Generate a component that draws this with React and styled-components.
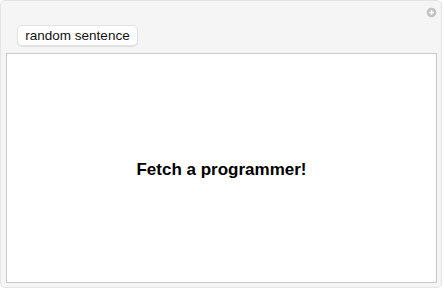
import React from "react";
import styled, { createGlobalStyle } from "styled-components";

const Global = createGlobalStyle`
  html, body { margin: 0; padding: 0; background: #ffffff; }
  body { font-family: "Liberation Sans", Arial, sans-serif; }
`;

const Panel = styled.div`
  position: relative;
  box-sizing: border-box;
  width: 442px;
  height: 288px;
  background: #f5f5f5;
  border: 1px solid #e4e4e4;
  border-radius: 5px;
  display: flex;
  flex-direction: column;
  padding: 24px 4px 4px 5px;
`;

const Toolbar = styled.div`
  display: flex;
  align-items: flex-start;
  height: 28px;
  padding-left: 11px;
`;

const Button = styled.button`
  box-sizing: border-box;
  height: 21px;
  width: 121px;
  padding: 0;
  background: #ffffff;
  border: 1px solid #e2e2e2;
  border-radius: 5px;
  box-shadow: 0 1px 1px rgba(0, 0, 0, 0.08);
  font-family: "Liberation Sans", Arial, sans-serif;
  font-size: 13.5px;
  color: #111;
  display: flex;
  align-items: center;
  justify-content: center;
`;

const Output = styled.div`
  flex: 1;
  box-sizing: border-box;
  background: #ffffff;
  border: 1px solid #c9c9c9;
  display: flex;
  align-items: center;
  justify-content: center;
`;

const Message = styled.div`
  font-family: "Liberation Sans", Arial, sans-serif;
  font-weight: bold;
  font-size: 17px;
  color: #000;
  margin-top: 4px;
`;

const AddIcon = styled.svg`
  position: absolute;
  top: 6px;
  right: 4px;
`;

export default function App() {
  return (
    <>
      <Global />
      <Panel>
        <AddIcon width="11" height="11" viewBox="0 0 11 11">
          <circle cx="5.5" cy="5.5" r="4.8" fill="#c2c2c2" />
          <path d="M5.5 3v5M3 5.5h5" stroke="#fff" strokeWidth="1.5" />
        </AddIcon>
        <Toolbar>
          <Button>random sentence</Button>
        </Toolbar>
        <Output>
          <Message>Fetch a programmer!</Message>
        </Output>
      </Panel>
    </>
  );
}
